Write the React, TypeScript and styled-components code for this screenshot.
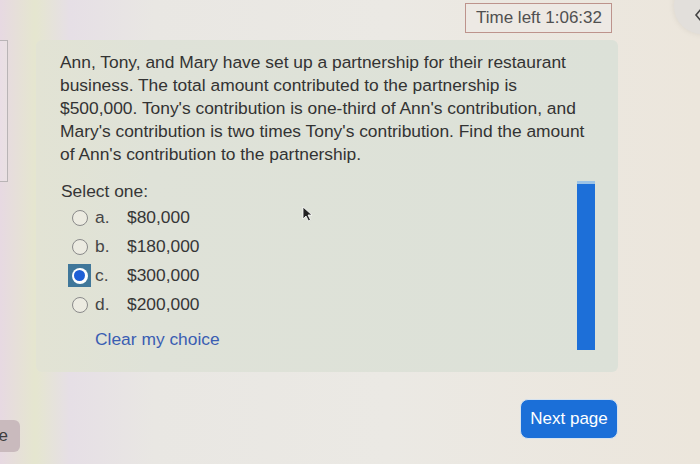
import React from 'react';
import styled, { createGlobalStyle } from 'styled-components';

const GlobalStyle = createGlobalStyle`
	html, body {
		margin: 0;
		padding: 0;
	}
	body {
		font-family: 'Liberation Sans', Arial, sans-serif;
	}
`;

const Page = styled.div`
	position: relative;
	width: 700px;
	height: 464px;
	overflow: hidden;
	display: grid;
	grid-template-columns: 36px 582px 1fr;
	grid-template-rows: 40px 332px 1fr;
	background: linear-gradient(
		90deg,
		#e7d9e2 0%,
		#e5e6cf 5%,
		#e6dfe6 10%,
		#e9e7e3 22%,
		#ebe9e4 55%,
		#ece6dc 100%
	);
	color: #363636;
`;

const TopBar = styled.div`
	grid-column: 2 / 4;
	grid-row: 1;
	display: flex;
	align-items: flex-start;
	justify-content: flex-end;
`;

const Timer = styled.div`
	margin-top: 3px;
	margin-right: 62px;
	height: 28px;
	padding: 0 9px 0 10px;
	display: flex;
	align-items: center;
	border: 1px solid #bd938c;
	background: #ede9e4;
	color: #505050;
	font-size: 17px;
`;

const BackCircle = styled.div`
	flex: none;
	margin-top: -22px;
	margin-right: -30px;
	width: 56px;
	height: 56px;
	border-radius: 50%;
	background: #e2dfdb;
	box-shadow: 0 0 6px rgba(0, 0, 0, 0.08);
	display: flex;
	align-items: center;
	padding-left: 20px;
	box-sizing: border-box;
	padding-top: 18px;
`;

const SideStub = styled.div`
	grid-column: 1;
	grid-row: 2;
	width: 8px;
	height: 140px;
	margin-left: -1px;
	border: 1px solid #b9b4b6;
	border-left: none;
	background: rgba(255, 255, 255, 0.15);
`;

const Card = styled.div`
	grid-column: 2;
	grid-row: 2;
	display: flex;
	border-radius: 6px;
	background: linear-gradient(90deg, #e2e3d4 0%, #dfe2d8 20%, #dce1d8 100%);
`;

const Content = styled.div`
	flex: 1;
	min-width: 0;
	padding: 11px 0 0 24px;
`;

const Question = styled.p`
	margin: 0;
	font-size: 17.4px;
	line-height: 23px;
	color: #333;
	white-space: nowrap;
`;

const Prompt = styled.div`
	margin-top: 14px;
	padding-left: 1px;
	font-size: 17.4px;
	line-height: 23px;
`;

const Options = styled.div`
	display: flex;
	flex-direction: column;
`;

const Option = styled.div`
	height: 29px;
	display: flex;
	align-items: center;
	padding-left: 11px;
	font-size: 17.4px;
`;

const RadioSlot = styled.span`
	width: 17px;
	display: flex;
	justify-content: center;
`;

const Radio = styled.span`
	width: 16px;
	height: 16px;
	border-radius: 50%;
	border: 1px solid #8a8a8a;
	background: #ecebe1;
	box-sizing: border-box;
`;

const FocusBox = styled.span`
	width: 23px;
	height: 23px;
	margin: 0 -3px;
	flex: none;
	background: #40779a;
	display: flex;
	align-items: center;
	justify-content: center;
`;

const CheckedRadio = styled.span`
	width: 16px;
	height: 16px;
	border-radius: 50%;
	background: #fff;
	display: flex;
	align-items: center;
	justify-content: center;

	&::after {
		content: '';
		width: 11px;
		height: 11px;
		border-radius: 50%;
		background: #1f5fd6;
	}
`;

const Letter = styled.span`
	width: 32px;
	margin-left: 7px;
	color: #464646;
`;

const Amount = styled.span`
	color: #363636;
`;

const ClearLink = styled.a`
	display: block;
	margin-top: 9px;
	margin-left: 35px;
	font-size: 17.4px;
	line-height: 23px;
	color: #3a5db2;
	text-decoration: none;
`;

const Bar = styled.div`
	flex: none;
	width: 18px;
	height: 169px;
	margin: 141px 23px 0 0;
	background: linear-gradient(180deg, #9cc3e6 0px, #9cc3e6 3px, #1d6fd8 3px);
`;

const BottomLeft = styled.div`
	grid-column: 1;
	grid-row: 3;
	padding-top: 48px;
`;

const GhostButton = styled.div`
	width: 64px;
	height: 32px;
	margin-left: -44px;
	border-radius: 6px;
	background: #c9babd;
	display: flex;
	align-items: center;
	justify-content: flex-end;
	padding-right: 12px;
	box-sizing: border-box;
	font-size: 17px;
	color: #3d3d3d;
`;

const BottomRight = styled.div`
	grid-column: 2;
	grid-row: 3;
	display: flex;
	justify-content: flex-end;
	align-items: flex-start;
	padding-top: 27px;
`;

const NextButton = styled.button`
	width: 98px;
	height: 40px;
	border-radius: 8px;
	border: 1px solid #d5e2ef;
	background: #1b6fd8;
	color: #fff;
	font-family: 'Liberation Sans', Arial, sans-serif;
	font-size: 17px;
	cursor: pointer;
`;

const Cursor = styled.svg`
	position: absolute;
	left: 302px;
	top: 206px;
`;

const lines = [
	'Ann, Tony, and Mary have set up a partnership for their restaurant',
	'business. The total amount contributed to the partnership is',
	"$500,000. Tony's contribution is one-third of Ann's contribution, and",
	"Mary's contribution is two times Tony's contribution. Find the amount",
	"of Ann's contribution to the partnership.",
];

const choices = [
	{ key: 'a.', value: '$80,000' },
	{ key: 'b.', value: '$180,000' },
	{ key: 'c.', value: '$300,000', checked: true },
	{ key: 'd.', value: '$200,000' },
];

const App: React.FC = () => {
	return (
		<Page>
			<GlobalStyle />
			<TopBar>
				<Timer>Time left 1:06:32</Timer>
				<BackCircle>
					<svg width="10" height="16" viewBox="0 0 10 16">
						<path d="M8 1 L2 8 L8 15" fill="none" stroke="#444" strokeWidth="1.6" />
					</svg>
				</BackCircle>
			</TopBar>

			<SideStub />

			<Card>
				<Content>
					<Question>
						{lines.map((l, i) => (
							<React.Fragment key={i}>
								{l}
								{i < lines.length - 1 && <br />}
							</React.Fragment>
						))}
					</Question>
					<Prompt>Select one:</Prompt>
					<Options>
						{choices.map((c) => (
							<Option key={c.key}>
								<RadioSlot>
									{c.checked ? (
										<FocusBox>
											<CheckedRadio />
										</FocusBox>
									) : (
										<Radio />
									)}
								</RadioSlot>
								<Letter>{c.key}</Letter>
								<Amount>{c.value}</Amount>
							</Option>
						))}
					</Options>
					<ClearLink href="#">Clear my choice</ClearLink>
				</Content>
				<Bar />
			</Card>

			<BottomLeft>
				<GhostButton>e</GhostButton>
			</BottomLeft>

			<BottomRight>
				<NextButton>Next page</NextButton>
			</BottomRight>

			<Cursor width="12" height="16" viewBox="0 0 12 16">
				<path d="M1 1 L1 13 L4 10 L6.5 15 L8.5 14 L6 9 L10 9 Z" fill="#222" stroke="#fff" strokeWidth="0.8" />
			</Cursor>
		</Page>
	);
};

export default App;
